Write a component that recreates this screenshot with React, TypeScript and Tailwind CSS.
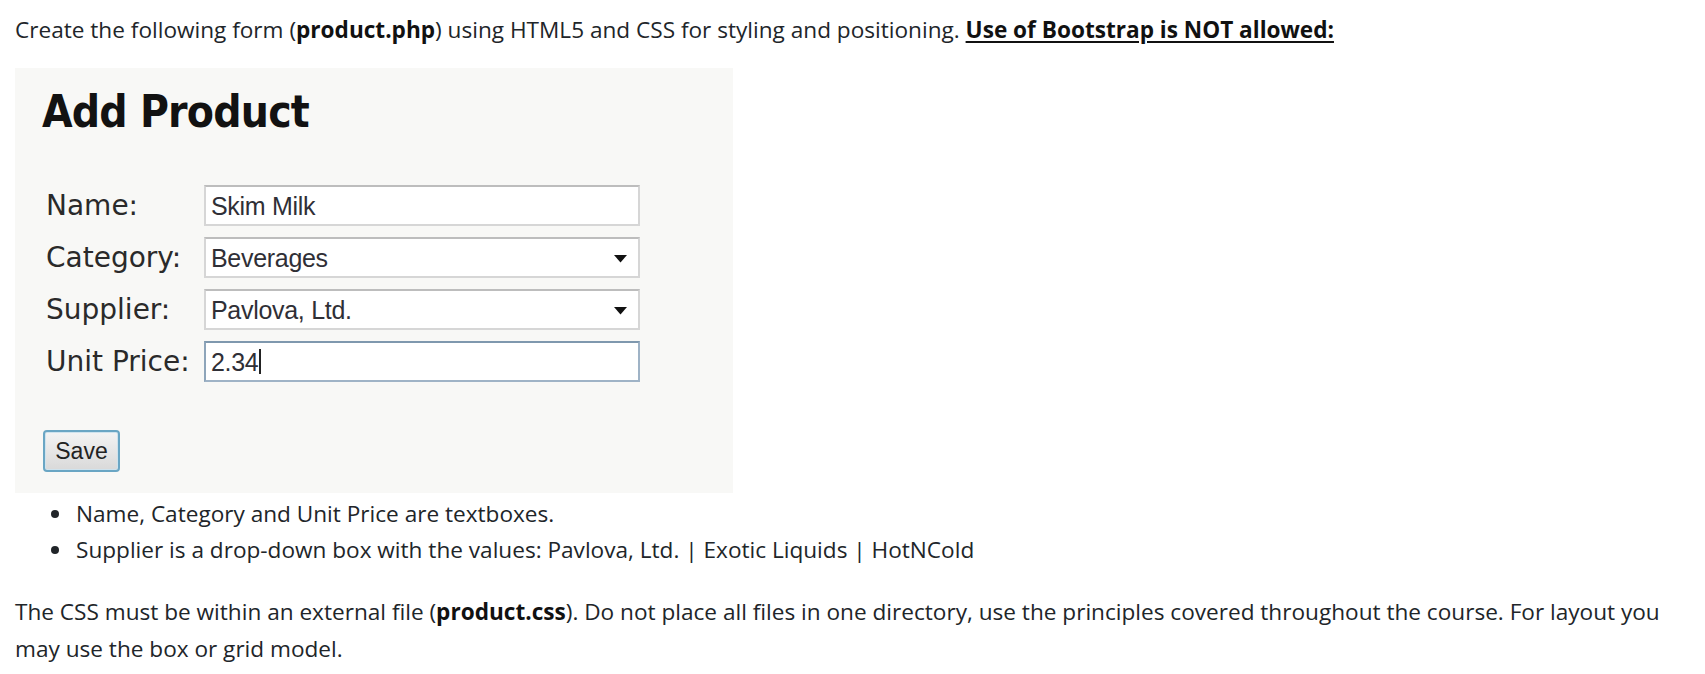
import React from 'react'

const rows = [
  { label: 'Name:', value: 'Skim Milk', kind: 'text' },
  { label: 'Category:', value: 'Beverages', kind: 'select' },
  { label: 'Supplier:', value: 'Pavlova, Ltd.', kind: 'select' },
  { label: 'Unit Price:', value: '2.34', kind: 'focus' },
]

function Field({ value, kind }: { value: string; kind: string }) {
  const border =
    kind === 'focus'
      ? 'border-[#9fb3c6] border-t-[#7f98ae] border-l-[#8ea5ba]'
      : 'border-[#d6d6d6] border-t-[#bdbdbd]'
  return (
    <div
      className={`relative flex h-[41px] w-[436px] items-center border-2 bg-white pl-[5px] text-[25px] text-[#2f2f36] ${border}`}
      style={{ fontFamily: '"Liberation Sans", Arial, sans-serif' }}
    >
      <span className="tracking-[-0.3px]">{value}</span>
      {kind === 'focus' && <span className="ml-[1px] h-[25px] w-[2px] bg-[#222]" />}
      {kind === 'select' && (
        <svg className="absolute right-[11px] top-[16px]" width="13" height="8" viewBox="0 0 13 8">
          <path d="M0 0 L13 0 L6.5 7.5 Z" fill="#111" />
        </svg>
      )}
    </div>
  )
}

export default function App() {
  return (
    <div
      className="min-h-screen bg-white pl-[15px] text-[22.6px] leading-[36px] text-[#212529]"
      style={{ fontFamily: '"Open Sans", "Noto Sans", sans-serif' }}
    >
      <p className="pt-[12px] whitespace-nowrap">
        Create the following form (<b className="text-[#111]">product.php</b>) using HTML5 and CSS for styling and
        positioning. <b className="text-[#111] underline underline-offset-[3px]">Use of Bootstrap is NOT allowed:</b>
      </p>

      <div className="mt-[20px] w-[718px] bg-[#f8f8f6] pb-[21px] pl-[27px] pt-[22px]">
        <h1
          className="text-[44px] font-bold leading-[44px] tracking-[-0.8px] text-[#121212]"
          style={{ fontFamily: '"DejaVu Sans Condensed", "DejaVu Sans", sans-serif' }}
        >
          Add Product
        </h1>

        <div className="mt-[51px] flex flex-col gap-[11px] pl-[4px]">
          {rows.map((r) => (
            <div key={r.label} className="flex items-center">
              <span
                className="w-[158px] text-[28px] leading-[32px] text-[#2a2a2a]"
                style={{ fontFamily: '"DejaVu Sans", sans-serif' }}
              >
                {r.label}
              </span>
              <Field value={r.value} kind={r.kind} />
            </div>
          ))}
        </div>

        <button
          className="mt-[48px] ml-[1px] flex h-[42px] w-[77px] items-center justify-center rounded-[4px] border-2 border-[#6aa6c4] bg-gradient-to-b from-[#f4f4f4] to-[#d9d9d9] text-[23px] text-[#222] shadow-[inset_0_0_0_1px_#cfe3ee]"
          style={{ fontFamily: '"Liberation Sans", Arial, sans-serif' }}
        >
          Save
        </button>
      </div>

      <ul className="mt-[3px]">
        <li className="flex items-center">
          <span className="ml-[36px] mr-[17px] h-[8px] w-[8px] rounded-full bg-[#212529]" />
          Name, Category and Unit Price are textboxes.
        </li>
        <li className="flex items-center">
          <span className="ml-[36px] mr-[17px] h-[8px] w-[8px] rounded-full bg-[#212529]" />
          Supplier is a drop-down box with the values: Pavlova, Ltd. | Exotic Liquids | HotNCold
        </li>
      </ul>

      <p className="mt-[25px] leading-[37px]">
        <span className="whitespace-nowrap">
          The CSS must be within an external file (<b className="text-[#111]">product.css</b>). Do not place all files
          in one directory, use the principles covered throughout the course. For layout you
        </span>
        <br />
        may use the box or grid model.
      </p>
    </div>
  )
}
